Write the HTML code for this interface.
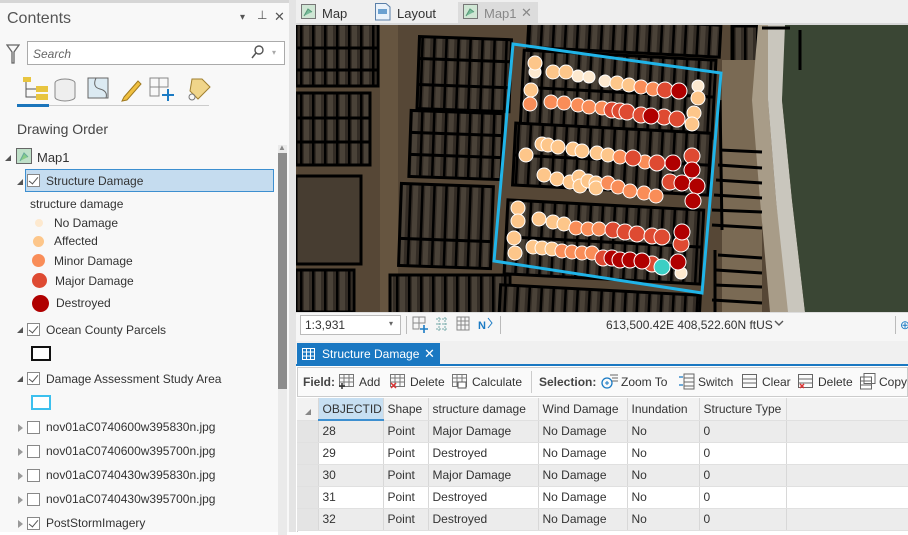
<!DOCTYPE html>
<html><head><meta charset="utf-8"><style>
*{margin:0;padding:0;box-sizing:border-box}
body{width:908px;height:532px;overflow:hidden;background:#fff;font-family:"Liberation Sans",sans-serif;font-size:12px;color:#333;position:relative}
.abs{position:absolute}
#left{left:0;top:0;width:289px;height:532px;background:#f8f8f8;border-top:3px solid #d6d6d6}
.t{position:absolute;white-space:nowrap}
.cb{position:absolute;width:13px;height:13px;border:1px solid #888;background:#fff}
.cb.on::after{content:"";position:absolute;left:3px;top:0px;width:4px;height:8px;border:solid #555;border-width:0 1.5px 1.5px 0;transform:rotate(40deg)}
.tri{position:absolute;width:0;height:0;border-style:solid}
.dn{border-width:0 0 6px 6px;border-color:transparent transparent #555 transparent}
.rt{border-width:4px 0 4px 5px;border-color:transparent transparent transparent #999}
.dot{position:absolute;border-radius:50%}
table{border-collapse:collapse;font-size:12px;color:#333}
td{height:22px;border-right:1px solid #d8d8d8;border-bottom:1px solid #e0e0e0;padding-left:4px;white-space:nowrap}
</style></head><body>
<div id="left" class="abs">
 <div class="t" style="left:7px;top:7px;font-size:16px;color:#555">Contents</div>
 <div class="t" style="left:240px;top:9px;font-size:10px;color:#555">▾</div>
 <div class="t" style="left:257px;top:5px;font-size:12px;color:#555">⊥</div>
 <div class="t" style="left:274px;top:6px;font-size:13px;color:#555">✕</div>
 <svg class="abs" style="left:6px;top:41px" width="14" height="20"><path d="M1 1H13L8 8V19H6V8Z" fill="none" stroke="#666" stroke-width="1.3"/></svg>
 <div class="abs" style="left:27px;top:38px;width:258px;height:24px;border:1px solid #aaa;background:#fff"></div>
 <div class="t" style="left:33px;top:44px;font-style:italic;color:#666;font-size:12px">Search</div>
 <svg class="abs" style="left:251px;top:42px" width="14" height="14"><circle cx="8" cy="5" r="4" fill="none" stroke="#555" stroke-width="1.4"/><path d="M5 8L1 13" stroke="#555" stroke-width="1.5"/></svg>
 <div class="t" style="left:272px;top:45px;font-size:8px;color:#aaa">▾</div>
 <svg class="abs" style="left:20px;top:72px" width="195" height="30">
  <rect x="3" y="2" width="8" height="5" fill="#e8c540"/><path d="M6 7V22H16M6 14H16" stroke="#555" fill="none"/><rect x="16" y="11" width="12" height="6" fill="#e8c540"/><rect x="16" y="19" width="12" height="6" fill="#e8c540"/>
  <ellipse cx="45" cy="8" rx="10" ry="4" fill="#eee" stroke="#888"/><path d="M35 8V22A10 4 0 0 0 55 22V8" fill="#eee" stroke="#888"/>
  <rect x="68" y="3" width="20" height="20" fill="#dceaf2" stroke="#666"/><path d="M76 3Q72 12 80 14T86 23" stroke="#666" fill="none"/>
  <path d="M104 22L118 6L121 9L107 25L102 26Z" fill="#f0c040" stroke="#a07a20"/>
  <path d="M130 3h9v9h-9zM139 3h9v9h-9zM130 12h9v9h-9z" fill="none" stroke="#888"/><path d="M148 14v12M142 20h12" stroke="#1b7bc4" stroke-width="2"/>
  <path d="M172 4h10l8 8-12 12-8-8z" fill="#f0d58a" stroke="#a08030"/><circle cx="172" cy="22" r="3" fill="none" stroke="#777"/>
 </svg>
 <div class="abs" style="left:17px;top:101px;width:32px;height:3px;background:#1b75bb"></div>
 <div class="abs" style="left:49px;top:102px;width:160px;height:1px;background:#ccc"></div>
 <div class="t" style="left:17px;top:118px;font-size:14px;color:#444">Drawing Order</div>
 <div class="abs" style="left:278px;top:142px;width:9px;height:390px;background:#eaeaea"></div>
 <div class="t" style="left:278px;top:140px;font-size:8px;color:#888">▲</div>
 <div class="abs" style="left:278px;top:150px;width:9px;height:236px;background:#8c8c8c"></div>
 <div class="tri dn" style="left:5px;top:152px"></div>
 <svg class="abs" style="left:16px;top:145px" width="16" height="16"><rect x=".5" y=".5" width="15" height="15" fill="#bfe0c8" stroke="#666"/><path d="M4 13L8 5L12 9" stroke="#6a9" fill="#8c8" /></svg>
 <div class="t" style="left:37px;top:147px;font-size:13px">Map1</div>
 <div class="abs" style="left:25px;top:166px;width:249px;height:23px;background:#c5dcef;border:1px solid #3d8fd0"></div>
 <div class="tri dn" style="left:17px;top:176px"></div>
 <div class="cb on" style="left:27px;top:171px"></div>
 <div class="t" style="left:46px;top:171px;font-size:12px">Structure Damage</div>
 <div class="t" style="left:30px;top:194px;font-size:12px;color:#333">structure damage</div>
 <div class="dot" style="left:35px;top:216px;width:8px;height:8px;background:#fde9cf"></div>
 <div class="t" style="left:54px;top:213px">No Damage</div>
 <div class="dot" style="left:33px;top:233px;width:11px;height:11px;background:#fdc68a"></div>
 <div class="t" style="left:54px;top:231px">Affected</div>
 <div class="dot" style="left:32px;top:251px;width:13px;height:13px;background:#f98d58"></div>
 <div class="t" style="left:54px;top:251px">Minor Damage</div>
 <div class="dot" style="left:32px;top:270px;width:15px;height:15px;background:#de4a32"></div>
 <div class="t" style="left:55px;top:271px">Major Damage</div>
 <div class="dot" style="left:32px;top:292px;width:17px;height:17px;background:#b00000"></div>
 <div class="t" style="left:56px;top:293px">Destroyed</div>
 <div class="tri dn" style="left:17px;top:324px"></div>
 <div class="cb on" style="left:27px;top:320px"></div>
 <div class="t" style="left:46px;top:320px">Ocean County Parcels</div>
 <div class="abs" style="left:31px;top:343px;width:20px;height:15px;border:2px solid #111;background:#fff"></div>
 <div class="tri dn" style="left:17px;top:373px"></div>
 <div class="cb on" style="left:27px;top:369px"></div>
 <div class="t" style="left:46px;top:369px">Damage Assessment Study Area</div>
 <div class="abs" style="left:31px;top:392px;width:20px;height:15px;border:2px solid #3cc0ee;background:#fff"></div>
 <div class="tri rt" style="left:18px;top:421px"></div><div class="cb" style="left:27px;top:418px"></div><div class="t" style="left:46px;top:417px">nov01aC0740600w395830n.jpg</div>
 <div class="tri rt" style="left:18px;top:445px"></div><div class="cb" style="left:27px;top:442px"></div><div class="t" style="left:46px;top:441px">nov01aC0740600w395700n.jpg</div>
 <div class="tri rt" style="left:18px;top:469px"></div><div class="cb" style="left:27px;top:466px"></div><div class="t" style="left:46px;top:465px">nov01aC0740430w395830n.jpg</div>
 <div class="tri rt" style="left:18px;top:493px"></div><div class="cb" style="left:27px;top:490px"></div><div class="t" style="left:46px;top:489px">nov01aC0740430w395700n.jpg</div>
 <div class="tri rt" style="left:18px;top:517px"></div><div class="cb on" style="left:27px;top:514px"></div><div class="t" style="left:46px;top:513px">PostStormImagery</div>
</div>
<div class="abs" style="left:289px;top:0;width:7px;height:532px;background:#e4e4e4"></div>
<div class="abs" style="left:296px;top:0;width:612px;height:25px;background:#efefef;border-bottom:2px solid #d8d8d8"></div>
<div class="abs" style="left:458px;top:2px;width:80px;height:21px;background:#dcdcdc"></div>
<svg class="abs" style="left:301px;top:4px" width="16" height="16"><rect x=".5" y=".5" width="14" height="14" fill="#cfe6d4" stroke="#777"/><path d="M3 12L7 5L11 8" fill="#7b9" stroke="#597"/></svg>
<div class="t" style="left:322px;top:6px;font-size:13px;color:#333">Map</div>
<svg class="abs" style="left:375px;top:3px" width="16" height="18"><path d="M.5 .5H11L15 4V17H.5Z" fill="#eaf2fa" stroke="#5a7fa8"/><rect x="3" y="6" width="9" height="5" fill="#6aa0d0"/></svg>
<div class="t" style="left:397px;top:6px;font-size:13px;color:#333">Layout</div>
<svg class="abs" style="left:463px;top:4px" width="16" height="16"><rect x=".5" y=".5" width="14" height="14" fill="#cfe6d4" stroke="#777"/><path d="M3 12L7 5L11 8" fill="#7b9" stroke="#597"/></svg>
<div class="t" style="left:484px;top:6px;font-size:13px;color:#888">Map1</div>
<div class="t" style="left:521px;top:5px;font-size:13px;color:#888">✕</div>
<svg class="abs" style="left:296px;top:25px" width="612" height="287" viewBox="296 25 612 287">
 <defs>
  <pattern id="lots" width="12" height="200" patternUnits="userSpaceOnUse"><rect width="12" height="200" fill="#332c25"/><rect x="4" y="0" width="5" height="200" fill="#4a4238"/><rect x="0" width="2.5" height="200" fill="#000"/></pattern>
 </defs>
 <rect x="296" y="25" width="612" height="287" fill="#564736"/>
 <rect x="380" y="25" width="18" height="287" fill="#665540"/>
 <g stroke="#000" stroke-width="3">
  <rect x="296" y="24" width="82" height="62" fill="url(#lots)"/>
  <line x1="296" y1="48" x2="378" y2="48"/><line x1="296" y1="70" x2="378" y2="70"/>
  <rect x="296" y="93" width="74" height="72" fill="url(#lots)"/>
  <line x1="296" y1="118" x2="370" y2="118"/><line x1="296" y1="142" x2="370" y2="142"/>
  <rect x="296" y="176" width="65" height="88" fill="#473d31"/>
  <rect x="296" y="270" width="58" height="42" fill="url(#lots)"/>
  <g transform="rotate(2 460 80)"><rect x="418" y="38" width="92" height="72" fill="url(#lots)"/><line x1="418" y1="60" x2="510" y2="60"/><line x1="418" y1="86" x2="510" y2="86"/></g>
  <g transform="rotate(2 455 145)"><rect x="410" y="112" width="92" height="66" fill="url(#lots)"/><line x1="410" y1="134" x2="502" y2="134"/><line x1="410" y1="156" x2="502" y2="156"/></g>
  <g transform="rotate(2 445 225)"><rect x="400" y="185" width="92" height="82" fill="url(#lots)"/><line x1="400" y1="240" x2="492" y2="240"/></g>
  <rect x="390" y="275" width="120" height="40" fill="url(#lots)"/>
  <g transform="rotate(3 620 40)"><rect x="528" y="20" width="192" height="32" fill="url(#lots)"/></g>
  <g transform="rotate(3 615 95)"><rect x="522" y="55" width="192" height="78" fill="url(#lots)"/><line x1="522" y1="92" x2="714" y2="92"/></g>
  <g transform="rotate(3 610 160)"><rect x="514" y="128" width="196" height="62" fill="url(#lots)"/><line x1="514" y1="160" x2="710" y2="160"/></g>
  <g transform="rotate(3 605 240)"><rect x="506" y="205" width="196" height="74" fill="url(#lots)"/><line x1="506" y1="242" x2="702" y2="242"/></g>
  <g transform="rotate(3 600 300)"><rect x="500" y="290" width="200" height="40" fill="url(#lots)"/></g>
  <rect x="732" y="26" width="30" height="40" fill="url(#lots)"/>
 </g>
 <rect x="722" y="60" width="40" height="252" fill="#7a6a54"/>
 <path d="M758 25L775 25L768 100L776 200L790 312L770 312L760 200L752 100Z" fill="#a89c88"/>
 <path d="M768 25L790 25L782 100L792 200L805 312L788 312L776 200L768 100Z" fill="#c9c6bd"/>
 <path d="M785 25H908V312H805L792 200L782 100Z" fill="#3a4634"/>
 <g stroke="#000" stroke-width="3" fill="none">
  <path d="M720 150L762 152M718 165L762 168M716 180L762 183M714 195L762 198M712 210L762 212M712 225L762 228M718 255L762 258M716 270L762 273M714 285L762 287M712 300L762 303"/>
  <path d="M720 100L722 230M715 250L715 312"/>
  <path d="M762 28H790M800 30L800 70"/>
 </g>
 <polygon points="513,44 721,73 702,293 494,261" fill="none" stroke="#20b4e8" stroke-width="3"/>
 <g stroke="#fff" stroke-width="1">
  <g fill="#fde9cf"><circle cx="535" cy="72" r="6"/><circle cx="578" cy="76" r="6"/><circle cx="589" cy="77" r="6"/><circle cx="605" cy="81" r="6"/><circle cx="698" cy="86" r="6"/><circle cx="681" cy="273" r="6"/></g>
  <g fill="#fdc68a"><circle cx="535" cy="63" r="7"/><circle cx="553" cy="72" r="7"/><circle cx="566" cy="72" r="7"/><circle cx="617" cy="83" r="7"/><circle cx="629" cy="85" r="7"/><circle cx="698" cy="98" r="7"/><circle cx="531" cy="90" r="7"/><circle cx="694" cy="113" r="7"/><circle cx="692" cy="124" r="7"/>
   <circle cx="526" cy="155" r="7"/><circle cx="542" cy="144" r="7"/><circle cx="548" cy="145" r="7"/><circle cx="558" cy="147" r="7"/><circle cx="573" cy="149" r="7"/><circle cx="582" cy="151" r="7"/><circle cx="597" cy="153" r="7"/><circle cx="608" cy="155" r="7"/>
   <circle cx="544" cy="175" r="7"/><circle cx="557" cy="179" r="7"/><circle cx="570" cy="182" r="7"/><circle cx="579" cy="177" r="7"/><circle cx="580" cy="186" r="7"/><circle cx="588" cy="181" r="7"/><circle cx="596" cy="183" r="7"/><circle cx="596" cy="188" r="7"/>
   <circle cx="518" cy="208" r="7"/><circle cx="518" cy="221" r="7"/><circle cx="539" cy="219" r="7"/><circle cx="553" cy="222" r="7"/><circle cx="564" cy="224" r="7"/>
   <circle cx="514" cy="238" r="7"/><circle cx="515" cy="253" r="7"/><circle cx="533" cy="247" r="7"/><circle cx="542" cy="248" r="7"/><circle cx="552" cy="249" r="7"/></g>
  <g fill="#f98d58"><circle cx="641" cy="87" r="7"/><circle cx="653" cy="89" r="7"/><circle cx="530" cy="104" r="7"/><circle cx="551" cy="102" r="7"/><circle cx="564" cy="103" r="7"/><circle cx="578" cy="105" r="7"/><circle cx="589" cy="107" r="7"/><circle cx="602" cy="108" r="7"/>
   <circle cx="620" cy="157" r="7"/><circle cx="645" cy="162" r="7"/><circle cx="608" cy="183" r="7"/><circle cx="618" cy="187" r="7"/><circle cx="630" cy="191" r="7"/><circle cx="644" cy="193" r="7"/><circle cx="656" cy="196" r="7"/>
   <circle cx="576" cy="228" r="7"/><circle cx="588" cy="229" r="7"/><circle cx="599" cy="229" r="7"/><circle cx="562" cy="251" r="7"/><circle cx="572" cy="252" r="7"/><circle cx="582" cy="253" r="7"/><circle cx="592" cy="253" r="7"/></g>
  <g fill="#de4a32"><circle cx="665" cy="90" r="8"/><circle cx="612" cy="110" r="8"/><circle cx="620" cy="111" r="8"/><circle cx="627" cy="112" r="8"/><circle cx="641" cy="115" r="8"/><circle cx="664" cy="117" r="8"/><circle cx="677" cy="119" r="8"/>
   <circle cx="633" cy="158" r="8"/><circle cx="657" cy="163" r="8"/><circle cx="692" cy="156" r="8"/><circle cx="670" cy="182" r="8"/>
   <circle cx="613" cy="230" r="8"/><circle cx="625" cy="232" r="8"/><circle cx="637" cy="234" r="8"/><circle cx="652" cy="236" r="8"/><circle cx="662" cy="237" r="8"/><circle cx="681" cy="244" r="8"/><circle cx="603" cy="258" r="8"/><circle cx="652" cy="264" r="8"/></g>
  <g fill="#b00000"><circle cx="679" cy="91" r="8"/><circle cx="651" cy="116" r="8"/><circle cx="673" cy="163" r="8"/><circle cx="692" cy="170" r="8"/><circle cx="682" cy="183" r="8"/><circle cx="697" cy="186" r="8"/><circle cx="693" cy="201" r="8"/>
   <circle cx="682" cy="232" r="8"/><circle cx="612" cy="258" r="8"/><circle cx="620" cy="260" r="8"/><circle cx="630" cy="260" r="8"/><circle cx="642" cy="261" r="8"/><circle cx="678" cy="262" r="8"/></g>
  <circle cx="662" cy="267" r="8" fill="#3ccfc4"/>
 </g>
</svg>
<div class="abs" style="left:296px;top:312px;width:612px;height:29px;background:#f6f6f6;border-top:1px solid #ddd"></div>
<div class="abs" style="left:300px;top:315px;width:101px;height:20px;border:1px solid #bbb;background:#fff"></div>
<div class="t" style="left:305px;top:318px;font-size:12px">1:3,931</div>
<div class="t" style="left:389px;top:319px;font-size:8px;color:#666">▾</div>
<div class="abs" style="left:406px;top:316px;width:1px;height:18px;background:#bbb"></div>
<svg class="abs" style="left:412px;top:315px" width="90" height="18"><path d="M1 2h6v6h-6zM7 2h6v6h-6zM1 8h6v6h-6z" fill="none" stroke="#888"/><path d="M12 10v8M8 14h8" stroke="#1b7bc4" stroke-width="1.6"/><path d="M24 4h12M24 9h12M24 14h12M27 2v14M33 2v14" stroke="#7aa" stroke-dasharray="2 1"/><path d="M45 2h12v13h-12zM45 6h12M45 10h12M49 2v13M53 2v13" fill="none" stroke="#888"/><text x="66" y="14" font-size="11" font-weight="bold" fill="#1b7bc4" font-family="Liberation Sans">N</text><path d="M76 3l4 5-4 5" stroke="#1b7bc4" fill="none"/></svg>
<div class="abs" style="left:500px;top:316px;width:1px;height:18px;background:#bbb"></div>
<div class="t" style="left:606px;top:318px;font-size:12px">613,500.42E 408,522.60N ftUS</div>
<svg class="abs" style="left:774px;top:320px" width="10" height="7"><path d="M1 1l4 4 4-4" stroke="#555" fill="none" stroke-width="1.4"/></svg>
<div class="abs" style="left:895px;top:316px;width:1px;height:18px;background:#bbb"></div>
<div class="t" style="left:900px;top:318px;font-size:12px;color:#1b7bc4">⊕</div>
<div class="abs" style="left:296px;top:341px;width:612px;height:24px;background:#f0f0f0"></div>
<div class="abs" style="left:297px;top:343px;width:143px;height:22px;background:#1a78c2"></div>
<div class="abs" style="left:296px;top:364px;width:612px;height:2px;background:#1a78c2"></div>
<svg class="abs" style="left:302px;top:348px" width="13" height="12"><path d="M.5 .5h12v11h-12zM.5 4h12M.5 8h12M4.5 .5v11M8.5 .5v11" fill="none" stroke="#fff"/></svg>
<div class="t" style="left:322px;top:347px;font-size:12px;color:#fff">Structure Damage</div>
<div class="t" style="left:424px;top:346px;font-size:13px;color:#fff">✕</div>
<div class="abs" style="left:297px;top:367px;width:611px;height:30px;background:#fafafa;border:1px solid #ccc"></div>
<div class="t" style="left:303px;top:375px;font-weight:bold;color:#444">Field:</div>
<svg class="abs" style="left:339px;top:374px" width="16" height="15"><path d="M.5 .5h14v12h-14zM.5 4h14M.5 8h14M5 .5v12M10 .5v12" fill="none" stroke="#777"/><path d="M3 9v6M0 12h6" stroke="#333" stroke-width="1.5"/></svg>
<div class="t" style="left:359px;top:375px">Add</div>
<svg class="abs" style="left:390px;top:374px" width="16" height="15"><path d="M.5 .5h14v12h-14zM.5 4h14M.5 8h14M5 .5v12M10 .5v12" fill="none" stroke="#777"/><path d="M1 9l5 5M6 9l-5 5" stroke="#d33" stroke-width="1.5"/></svg>
<div class="t" style="left:410px;top:375px">Delete</div>
<svg class="abs" style="left:452px;top:374px" width="16" height="15"><path d="M.5 .5h14v12h-14zM.5 4h14M.5 8h14M5 .5v12M10 .5v12" fill="none" stroke="#777"/><rect x="6" y="8" width="8" height="6" fill="#fff" stroke="#555"/></svg>
<div class="t" style="left:472px;top:375px">Calculate</div>
<div class="abs" style="left:531px;top:371px;width:1px;height:22px;background:#ccc"></div>
<div class="t" style="left:539px;top:375px;font-weight:bold;color:#444">Selection:</div>
<svg class="abs" style="left:601px;top:373px" width="18" height="17"><circle cx="6" cy="10" r="5" fill="none" stroke="#1b7bc4" stroke-width="1.3"/><path d="M4 10h4M6 8v4" stroke="#1b7bc4"/><path d="M9 2h8M11 5h6M11 8h6" stroke="#666"/></svg>
<div class="t" style="left:621px;top:375px">Zoom To</div>
<svg class="abs" style="left:678px;top:373px" width="17" height="17"><path d="M6 1h10v15h-10zM6 5h10M6 9h10M6 13h10" fill="none" stroke="#666"/><path d="M1 4h4M1 12h4" stroke="#1b7bc4" stroke-width="1.3"/></svg>
<div class="t" style="left:698px;top:375px">Switch</div>
<svg class="abs" style="left:742px;top:374px" width="15" height="15"><path d="M.5 .5h14v13h-14zM.5 5h14M.5 9h14" fill="none" stroke="#666"/></svg>
<div class="t" style="left:762px;top:375px">Clear</div>
<svg class="abs" style="left:798px;top:374px" width="16" height="16"><path d="M.5 .5h14v13h-14zM.5 5h14M.5 9h14" fill="none" stroke="#666"/><path d="M2 10l4 4M6 10l-4 4" stroke="#d33" stroke-width="1.5"/></svg>
<div class="t" style="left:818px;top:375px">Delete</div>
<svg class="abs" style="left:860px;top:373px" width="16" height="17"><path d="M4 .5h11v10h-11zM.5 4h11v12h-11zM.5 8h11M.5 12h11" fill="#fff" stroke="#666"/></svg>
<div class="t" style="left:879px;top:375px">Copy</div>
<div class="abs" style="left:297px;top:398px;width:611px;height:134px;background:#fff;border-left:1px solid #ccc"></div>
<table class="abs" style="left:297px;top:398px;width:611px">
<tr style="background:#f2f2f2;height:21px"><td style="width:21px;background:#f2f2f2"></td><td style="width:65px;background:#c7dff2;border-bottom:2px solid #3d8fd0">OBJECTID</td><td style="width:45px">Shape</td><td style="width:110px">structure damage</td><td style="width:89px">Wind Damage</td><td style="width:72px">Inundation</td><td style="width:87px">Structure Type</td><td style="border-right:0"></td></tr>
<tr style="background:#ececec"><td style="background:#e4e4e4"></td><td>28</td><td>Point</td><td>Major Damage</td><td>No Damage</td><td>No</td><td>0</td><td style="border-right:0"></td></tr>
<tr style="background:#fff"><td style="background:#e4e4e4"></td><td>29</td><td>Point</td><td>Destroyed</td><td>No Damage</td><td>No</td><td>0</td><td style="border-right:0"></td></tr>
<tr style="background:#ececec"><td style="background:#e4e4e4"></td><td>30</td><td>Point</td><td>Major Damage</td><td>No Damage</td><td>No</td><td>0</td><td style="border-right:0"></td></tr>
<tr style="background:#fff"><td style="background:#e4e4e4"></td><td>31</td><td>Point</td><td>Destroyed</td><td>No Damage</td><td>No</td><td>0</td><td style="border-right:0"></td></tr>
<tr style="background:#ececec"><td style="background:#e4e4e4"></td><td>32</td><td>Point</td><td>Destroyed</td><td>No Damage</td><td>No</td><td>0</td><td style="border-right:0"></td></tr>
</table>
<div class="tri dn" style="left:305px;top:409px;border-width:0 0 6px 6px;border-color:transparent transparent #888 transparent"></div>
</body></html>
